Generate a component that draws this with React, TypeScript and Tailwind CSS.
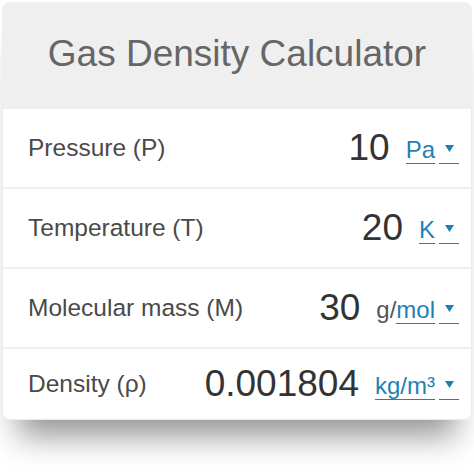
import React from 'react';

const rows = [
    { label: 'Pressure (P)', value: '10', unit: [{ text: 'Pa', link: true }] },
    { label: 'Temperature (T)', value: '20', unit: [{ text: 'K', link: true }] },
    { label: 'Molecular mass (M)', value: '30', unit: [{ text: 'g/', link: false }, { text: 'mol', link: true }] },
    { label: 'Density (ρ)', value: '0.001804', unit: [{ text: 'kg/m³', link: true }] },
];

function Caret() {
    return (
        <span className="flex items-start border-b-[1.5px] border-[#1f7fb4] ml-[4px] pl-[6px] pr-[5px] pt-[8px] h-[27px]">
            <svg width="9" height="7" viewBox="0 0 9 7">
                <path d="M0 0 H9 L4.5 7 Z" fill="#1f7fb4" />
            </svg>
        </span>
    );
}

export default function App() {
    return (
        <div className="w-[474px] h-[474px] bg-white p-[2px] font-['Liberation_Sans',Arial,sans-serif]">
            <div className="w-[470px] rounded-[8px] overflow-hidden shadow-[0_32px_30px_-16px_rgba(0,0,0,0.42)]">
                <div className="h-[105px] bg-[#efefef] flex items-center justify-center pb-[1px]">
                    <h1 className="text-[37px] text-[#666]">Gas Density Calculator</h1>
                </div>
                <div className="bg-white border-x border-b border-[#ebebeb] rounded-b-[8px]">
                    {rows.map((row, i) => (
                        <div
                            key={row.label}
                            className={`flex items-center justify-between pl-[25px] pr-[12px] border-t-2 border-[#efefef] ${i === 3 ? 'h-[72px]' : 'h-[80px]'}`}
                        >
                            <span className="text-[24.5px] text-[#4a4a4a]">{row.label}</span>
                            <div className="flex items-center">
                                <span className="text-[37px] text-[#333] mr-[16px]">{row.value}</span>
                                <span className="flex items-end text-[24px] text-[#1f7fb4] leading-[25px] mt-[4px]">
                                    {row.unit.map((u) =>
                                        u.link ? (
                                            <span key={u.text} className="border-b-[1.5px] border-[#1f7fb4] h-[27px]">{u.text}</span>
                                        ) : (
                                            <span key={u.text} className="text-[#555] h-[27px]">{u.text}</span>
                                        )
                                    )}
                                    <Caret />
                                </span>
                            </div>
                        </div>
                    ))}
                </div>
            </div>
        </div>
    );
}
